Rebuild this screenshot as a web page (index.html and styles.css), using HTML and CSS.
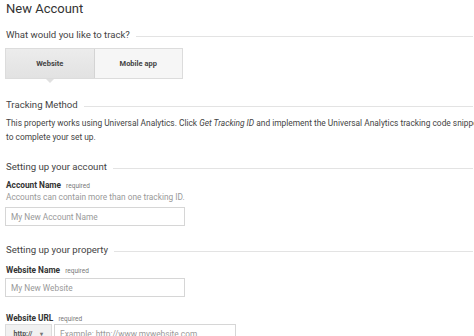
FILE: index.html
```html
<!DOCTYPE html>
<html lang="en">
<head>
    <meta charset="UTF-8">
    <meta name="viewport" content="width=device-width, initial-scale=1.0">
    <title>New Account</title>
    <link rel="stylesheet" href="styles.css">
</head>
<body>
    <div class="page">
        <h1 class="page-title">New Account</h1>

        <!-- What to track -->
        <h2 class="section-title"><span>What would you like to track?</span></h2>
        <div class="tabs">
            <div class="tab active">Website</div>
            <div class="tab">Mobile app</div>
        </div>

        <!-- Tracking method -->
        <h2 class="section-title method-title"><span>Tracking Method</span></h2>
        <p class="intro">This property works using Universal Analytics. Click <em>Get Tracking ID</em> and implement the Universal Analytics tracking code snippet<br>to complete your set up.</p>

        <!-- Account -->
        <h2 class="section-title account-title"><span>Setting up your account</span></h2>
        <div class="field account-field">
            <label class="field-label">Account Name <span class="req">required</span></label>
            <div class="hint">Accounts can contain more than one tracking ID.</div>
            <input class="text-input" type="text" placeholder="My New Account Name">
        </div>

        <!-- Property -->
        <h2 class="section-title property-title"><span>Setting up your property</span></h2>
        <div class="field">
            <label class="field-label">Website Name <span class="req">required</span></label>
            <input class="text-input tight" type="text" placeholder="My New Website">
        </div>

        <div class="field url-field">
            <label class="field-label">Website URL <span class="req">required</span></label>
            <div class="url-row">
                <div class="protocol">http:// <span class="caret">&#9662;</span></div>
                <input class="text-input url-input" type="text" placeholder="Example: http://www.mywebsite.com">
            </div>
        </div>
    </div>
</body>
</html>
```

FILE: styles.css
```css
html, body {
    margin: 0;
    padding: 0;
    overflow: hidden;
}

body {
    font-family: 'Roboto', 'Liberation Sans', sans-serif;
    background-color: #fff;
    color: #333;
}

.page {
    width: 467px;
    padding: 0 0 0 6px;
}

.page-title {
    font-size: 13px;
    font-weight: 400;
    color: #333;
    margin: 0;
    padding-top: 1px;
    line-height: 16px;
}

/* Titulos con linea */
.section-title {
    display: flex;
    align-items: center;
    font-size: 9.6px;
    font-weight: 400;
    color: #444;
    margin: 12px 0 0;
    line-height: 12px;
}

.section-title::after {
    content: '';
    flex: 1;
    height: 1px;
    background-color: #e3e3e3;
    margin-left: 6px;
    margin-top: 3px;
}

.tabs {
    display: flex;
    width: 178px;
    height: 31px;
    margin: 7px 0 0 -1px;
    border: 1px solid #dcdcdc;
    box-sizing: border-box;
    position: relative;
}

.tab {
    flex: 1;
    display: flex;
    align-items: center;
    justify-content: center;
    font-size: 7.5px;
    font-weight: 700;
    color: #444;
    background-color: #f6f6f6;
}

.tab.active {
    background: linear-gradient(#ececec, #e2e2e2);
    border-right: 1px solid #d4d4d4;
    position: relative;
}

.tab.active::after {
    content: '';
    position: absolute;
    left: 50%;
    bottom: -5px;
    margin-left: -4px;
    border-left: 4px solid transparent;
    border-right: 4px solid transparent;
    border-top: 4px solid #e0e0e0;
}

.method-title {
    margin-top: 20px;
}

.intro {
    font-size: 8.4px;
    line-height: 14px;
    color: #444;
    margin: 5px 0 0;
    white-space: nowrap;
}

.account-title {
    margin-top: 17px;
}

.property-title {
    margin-top: 18px;
}

.field {
    margin-top: 9px;
}

.account-field {
    margin-top: 7px;
}

.field-label {
    display: block;
    font-size: 8.3px;
    font-weight: 700;
    color: #333;
    line-height: 11px;
}

.req {
    font-size: 6.5px;
    font-weight: 400;
    color: #777;
    margin-left: 3px;
}

.hint {
    font-size: 8.3px;
    color: #999;
    line-height: 11px;
}

.text-input {
    display: block;
    width: 180px;
    height: 19px;
    box-sizing: border-box;
    margin: 4px 0 0 -1px;
    padding: 0 5px;
    border: 1px solid #d6d6d6;
    font-family: 'Roboto', 'Liberation Sans', sans-serif;
    font-size: 8.3px;
    color: #333;
    outline: none;
}

.text-input.tight {
    margin-top: 1px;
}

.text-input::placeholder {
    color: #999;
}

.url-field {
    margin-top: 16px;
}

.url-row {
    display: flex;
    margin-top: -1px;
    margin-left: -1px;
}

.protocol {
    width: 47px;
    height: 19px;
    box-sizing: border-box;
    display: flex;
    align-items: center;
    justify-content: center;
    gap: 8px;
    background-color: #f1f1f1;
    border: 1px solid #dcdcdc;
    font-size: 7px;
    font-weight: 700;
    color: #555;
}

.caret {
    font-size: 6px;
    color: #777;
}

.url-input {
    width: 182px;
    margin: 0 0 0 2px;
}
```
